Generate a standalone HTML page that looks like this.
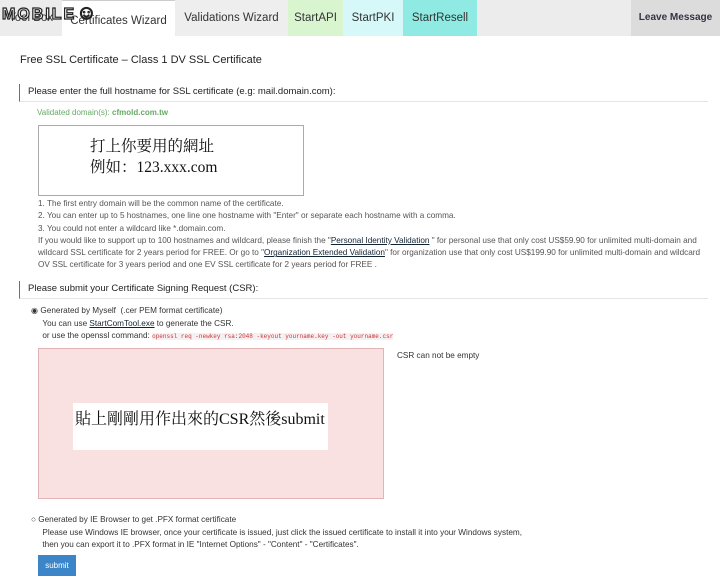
<!DOCTYPE html>
<html><head><meta charset="utf-8"><style>
body{margin:0;width:720px;height:580px;background:#fff;font-family:"Liberation Sans",sans-serif;position:relative;overflow:hidden;color:#333}
.a{position:absolute;white-space:nowrap}
.tab{position:absolute;top:0;height:36px;line-height:36px;font-size:11.5px;text-align:center;color:#333}
.s{font-size:8.2px;color:#555}
.hdr{position:absolute;left:19px;width:689px;height:18px;border-left:1px solid #3a7fb0;border-bottom:1px solid #e4e4e4;font-size:9.5px;line-height:16px;padding-left:8px;color:#222;box-sizing:border-box}
u{color:#123}
</style></head><body>
<div class="tab" style="left:0;width:62px;background:#ececec">Tool Box</div>
<div class="tab" style="left:62px;width:113px;background:#fff;border-top:1px solid #ccc;line-height:40px">Certificates Wizard</div>
<div class="tab" style="left:175px;width:113px;background:#eee">Validations Wizard</div>
<div class="tab" style="left:288px;width:55px;background:#d8f5d0">StartAPI</div>
<div class="tab" style="left:343px;width:60px;background:#d6f8f8">StartPKI</div>
<div class="tab" style="left:403px;width:74px;background:#8eeae2">StartResell</div>
<div class="tab" style="left:477px;width:154px;background:#ececec"></div>
<div class="tab" style="left:631px;width:89px;background:#dcdcdc;font-size:10px;font-weight:bold;color:#334">Leave Message</div>
<div class="a" style="left:2px;top:2px;font-size:16px;font-weight:bold;letter-spacing:2px;color:#fff;-webkit-text-stroke:1.2px #222">MOBILE<span style="font-size:20px">☺</span></div>
<div class="a" style="left:20px;top:54px;font-size:11px;color:#222">Free SSL Certificate – Class 1 DV SSL Certificate</div>
<div class="hdr" style="top:84px">Please enter the full hostname for SSL certificate (e.g: mail.domain.com):</div>
<div class="a" style="left:37px;top:108px;font-size:8px;color:#6a6">Validated domain(s): <b>cfmold.com.tw</b></div>
<div class="a" style="left:38px;top:125px;width:266px;height:71px;border:1px solid #aaa;box-sizing:border-box"></div>
<div class="a" style="left:90px;top:136px;font-size:15.5px;line-height:21px;color:#111;font-family:'Liberation Serif','Noto Serif CJK SC',serif">打上你要用的網址<br>例如：123.xxx.com</div>
<div class="a s" style="left:38px;top:198px;line-height:12.3px">1. The first entry domain will be the common name of the certificate.<br>2. You can enter up to 5 hostnames, one line one hostname with "Enter" or separate each hostname with a comma.<br>3. You could not enter a wildcard like *.domain.com.<br>If you would like to support up to 100 hostnames and wildcard, please finish the "<u>Personal Identity Validation</u> " for personal use that only cost US$59.90 for unlimited multi-domain and<br>wildcard SSL certificate for 2 years period for FREE. Or go to "<u>Organization Extended Validation</u>" for organization use that only cost US$199.90 for unlimited multi-domain and wildcard<br>OV SSL certificate for 3 years period and one EV SSL certificate for 2 years period for FREE .</div>
<div class="hdr" style="top:281px">Please submit your Certificate Signing Request (CSR):</div>
<div class="a s" style="left:31px;top:305px;line-height:12.5px;color:#333">◉ Generated by Myself &nbsp;(.cer PEM format certificate)<br>&nbsp;&nbsp;&nbsp;&nbsp;&nbsp;You can use <u>StartComTool.exe</u> to generate the CSR.<br>&nbsp;&nbsp;&nbsp;&nbsp;&nbsp;or use the openssl command: <span style="font-family:'Liberation Mono',monospace;font-size:6px;color:#c33;background:#f7f0f2">openssl req -newkey rsa:2048 -keyout yourname.key -out yourname.csr</span></div>
<div class="a" style="left:38px;top:348px;width:346px;height:151px;background:#f9e1e1;border:1px solid #e0b4b4;box-sizing:border-box"></div>
<div class="a" style="left:73px;top:403px;width:255px;height:47px;background:#fff"></div>
<div class="a" style="left:75px;top:406px;font-size:16px;color:#111;font-family:'Liberation Serif','Noto Serif CJK SC',serif">貼上剛剛用作出來的CSR然後submit</div>
<div class="a s" style="left:397px;top:351px;color:#333">CSR can not be empty</div>
<div class="a s" style="left:31px;top:514px;line-height:12.5px;color:#333">○ Generated by IE Browser to get .PFX format certificate<br>&nbsp;&nbsp;&nbsp;&nbsp;&nbsp;Please use Windows IE browser, once your certificate is issued, just click the issued certificate to install it into your Windows system,<br>&nbsp;&nbsp;&nbsp;&nbsp;&nbsp;then you can export it to .PFX format in IE "Internet Options" - "Content" - "Certificates".</div>
<div class="a" style="left:38px;top:555px;width:38px;height:21px;background:#3c85c8;color:#fff;font-size:8px;line-height:21px;text-align:center">submit</div>
</body></html>
